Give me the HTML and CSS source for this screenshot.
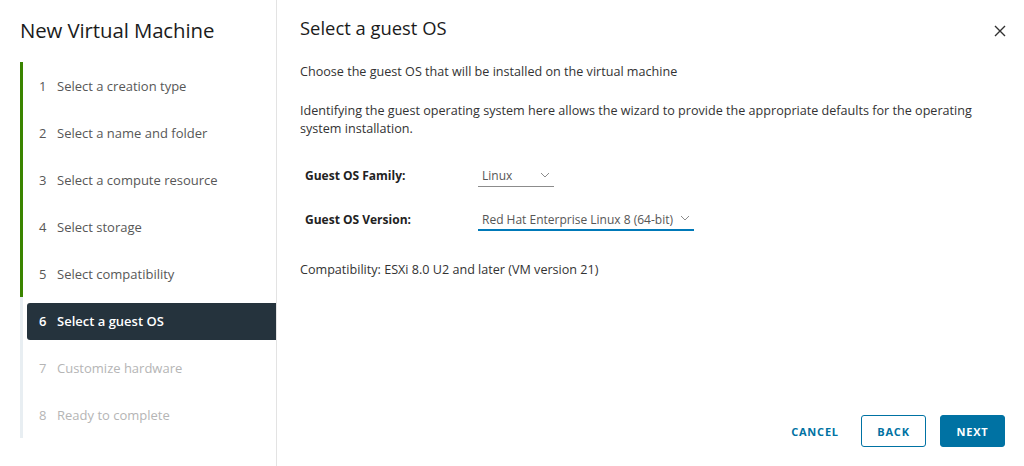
FILE: index.html
```html
<!DOCTYPE html>
<html>
<head>
<meta charset="utf-8">
<link rel="stylesheet" href="styles.css">
</head>
<body>
<div class="wizard">
  <aside class="sidebar">
    <h1 class="wiz-title">New Virtual Machine</h1>
    <ol class="steps">
      <li class="step done"><span class="num">1</span><span>Select a creation type</span></li>
      <li class="step done"><span class="num">2</span><span>Select a name and folder</span></li>
      <li class="step done"><span class="num">3</span><span>Select a compute resource</span></li>
      <li class="step done"><span class="num">4</span><span>Select storage</span></li>
      <li class="step done"><span class="num">5</span><span>Select compatibility</span></li>
      <li class="step current"><div class="current-box"><span class="num">6</span><span>Select a guest OS</span></div></li>
      <li class="step todo"><span class="num">7</span><span>Customize hardware</span></li>
      <li class="step todo"><span class="num">8</span><span>Ready to complete</span></li>
    </ol>
  </aside>
  <main class="content">
    <header class="content-head">
      <h2 class="page-title">Select a guest OS</h2>
      <button class="close" aria-label="Close">
        <svg width="14" height="14" viewBox="0 0 14 14"><path d="M2 2 L12 12 M12 2 L2 12" stroke="#313131" stroke-width="1.4" fill="none"/></svg>
      </button>
    </header>
    <section class="body">
      <p class="lead">Choose the guest OS that will be installed on the virtual machine</p>
      <p class="desc">Identifying the guest operating system here allows the wizard to provide the appropriate defaults for the operating system installation.</p>
      <div class="form">
        <div class="row">
          <label class="lbl">Guest OS Family:</label>
          <div class="select family"><span>Linux</span><svg class="chev" width="10" height="6" viewBox="0 0 10 6"><path d="M1 1 L5 5 L9 1" stroke="#8c8c8c" stroke-width="1" fill="none"/></svg></div>
        </div>
        <div class="row">
          <label class="lbl">Guest OS Version:</label>
          <div class="select version"><span>Red Hat Enterprise Linux 8 (64-bit)</span><svg class="chev" width="10" height="6" viewBox="0 0 10 6"><path d="M1 1 L5 5 L9 1" stroke="#8c8c8c" stroke-width="1" fill="none"/></svg></div>
        </div>
      </div>
      <p class="compat">Compatibility: ESXi 8.0 U2 and later (VM version 21)</p>
    </section>
    <footer class="actions">
      <button class="btn link">CANCEL</button>
      <button class="btn outline">BACK</button>
      <button class="btn primary">NEXT</button>
    </footer>
  </main>
</div>
</body>
</html>
```

FILE: styles.css
```css
* { box-sizing: border-box; }
html, body { margin: 0; padding: 0; }
body {
  font-family: "Open Sans", "Noto Sans", sans-serif;
  color: #333;
  background: #fff;
  width: 1024px;
  height: 466px;
  overflow: hidden;
}
.wizard {
  display: flex;
  height: 466px;
}
.sidebar {
  width: 277px;
  flex: none;
  border-right: 1px solid #e3e3e3;
  padding-left: 20px;
}
.wiz-title {
  margin: 0;
  padding-top: 17px;
  height: 62px;
  font-size: 20.4px;
  font-weight: 400;
  line-height: 26px;
  color: #1b1b1b;
  letter-spacing: -0.1px;
}
.steps {
  list-style: none;
  margin: 0;
  padding: 0;
}
.step {
  height: 47px;
  display: flex;
  align-items: center;
  border-left: 3px solid #e8eef2;
  padding-left: 16px;
  font-size: 13px;
  color: #575757;
}
.step .num { width: 18px; flex: none; }
.step.done { border-left-color: #3a8400; }
.step.todo { color: #b5b5b5; }
.step.current {
  padding-left: 4px;
  align-items: flex-start;
  padding-top: 6px;
}
.current-box {
  width: 100%;
  height: 37px;
  background: #25333d;
  color: #fff;
  display: flex;
  align-items: center;
  padding-left: 12px;
  border-radius: 3px 0 0 3px;
  font-weight: 600;
}
.current-box span { margin-top: -1px; }
.content {
  flex: 1;
  display: flex;
  flex-direction: column;
  padding: 0 19px 19px 23px;
}
.content-head {
  display: flex;
  justify-content: space-between;
  align-items: center;
  height: 56px;
}
.page-title {
  margin: 0 0 2px;
  font-size: 18.4px;
  font-weight: 400;
  color: #1b1b1b;
}
.close {
  border: none;
  background: none;
  padding: 0;
  margin-right: -2px;
  margin-top: 6px;
  display: flex;
  cursor: pointer;
}
.body { font-size: 12.6px; color: #333; }
.lead { margin: 7px 0 0; line-height: 18px; }
.desc { margin: 21px 0 0; line-height: 18px; }
.form { margin-top: 15px; padding-left: 5px; }
.row {
  display: flex;
  align-items: center;
  height: 44px;
}
.lbl {
  width: 173px;
  font-weight: 700;
  font-size: 12px;
  color: #222;
}
.select {
  display: flex;
  align-items: center;
  justify-content: space-between;
  height: 24px;
  padding: 0 4px 0 4px;
  font-size: 12px;
  color: #565656;
  border-bottom: 1px solid #8c8c8c;
}
.select span { margin-top: 2px; }
.family { width: 76px; }
.version { width: 216px; border-bottom: 2px solid #0079b8; }
.chev { margin-left: 6px; }
.compat { margin: 20px 0 0; font-size: 12.6px; }
.actions {
  margin-top: auto;
  display: flex;
  justify-content: flex-end;
  align-items: center;
}
.btn {
  height: 32px;
  font-family: "Open Sans", sans-serif;
  font-size: 11px;
  font-weight: 700;
  letter-spacing: 0.8px;
  border-radius: 3px;
  cursor: pointer;
  padding: 0;
}
.btn.link {
  border: none;
  background: none;
  color: #0072a3;
  width: 72px;
  margin-right: 10px;
}
.btn.outline {
  width: 65px;
  background: #fff;
  border: 1px solid #0072a3;
  color: #0072a3;
  margin-right: 14px;
}
.btn.primary {
  width: 65px;
  background: #0072a3;
  border: 1px solid #0072a3;
  color: #fff;
}
```
